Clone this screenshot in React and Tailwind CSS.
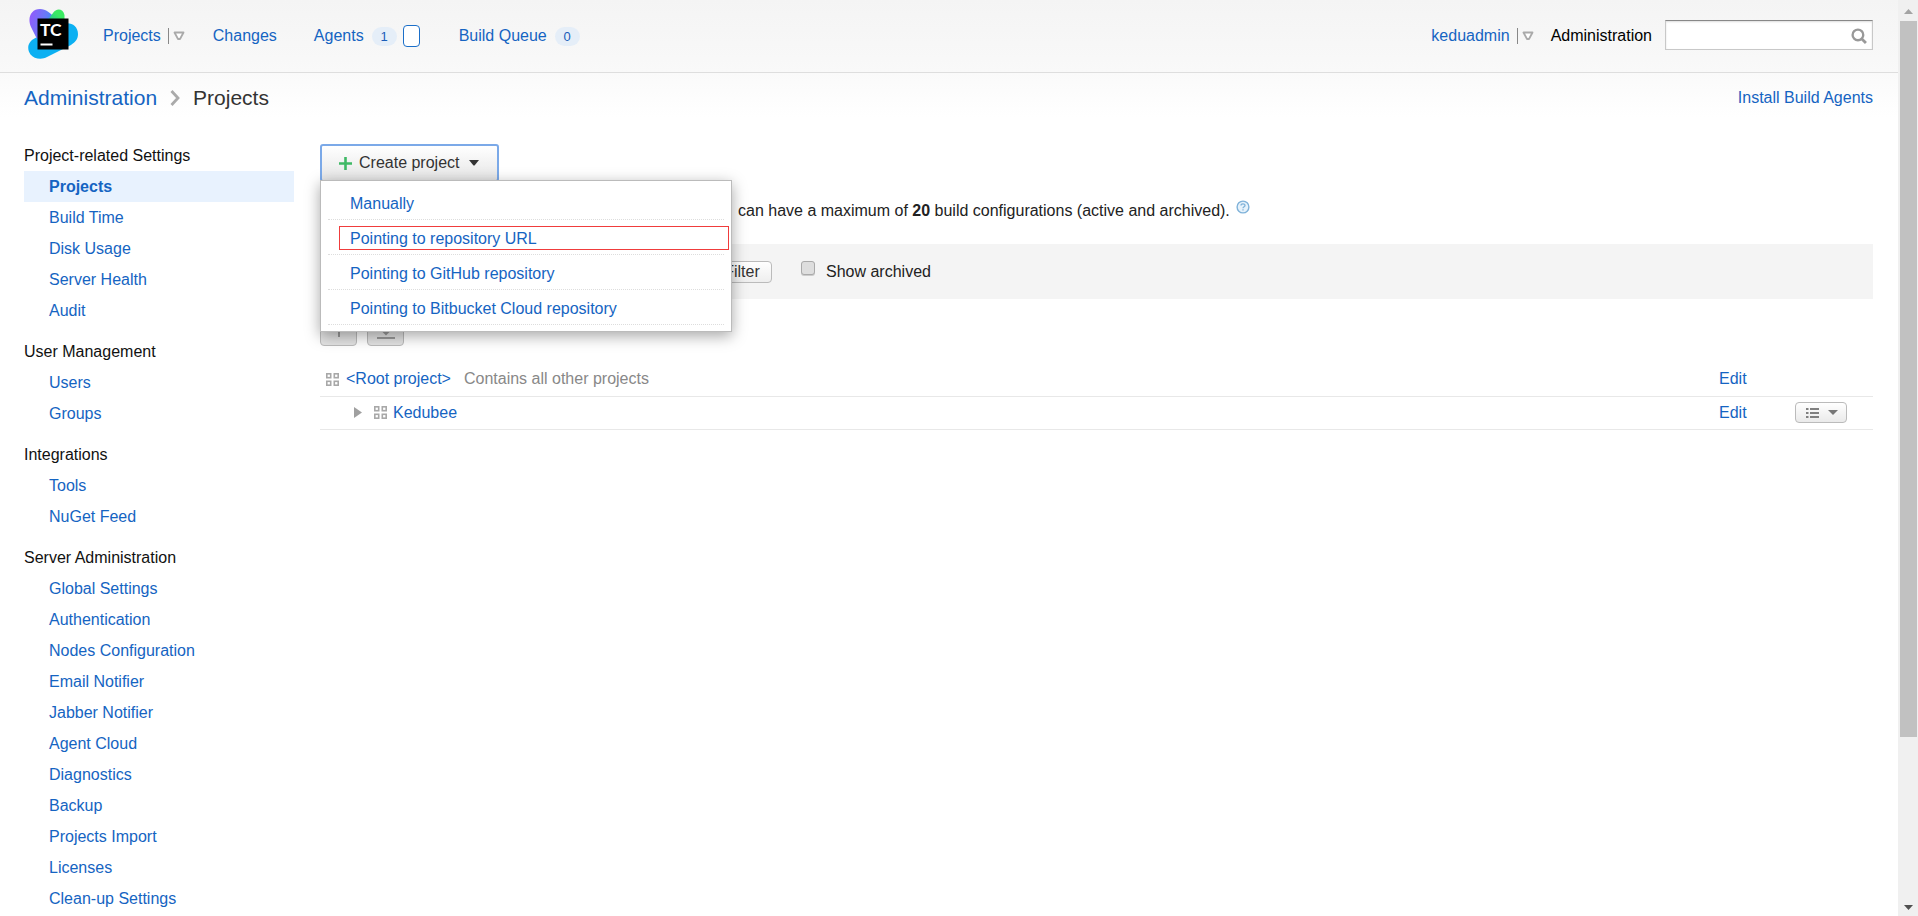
import { useState } from 'react'
import { clsx } from 'clsx'

const menuSections = [
  {
    title: 'Project-related Settings',
    items: ['Projects', 'Build Time', 'Disk Usage', 'Server Health', 'Audit']
  },
  {
    title: 'User Management',
    items: ['Users', 'Groups']
  },
  {
    title: 'Integrations',
    items: ['Tools', 'NuGet Feed']
  },
  {
    title: 'Server Administration',
    items: [
      'Global Settings',
      'Authentication',
      'Nodes Configuration',
      'Email Notifier',
      'Jabber Notifier',
      'Agent Cloud',
      'Diagnostics',
      'Backup',
      'Projects Import',
      'Licenses',
      'Clean-up Settings'
    ]
  }
]

const createOptions = [
  { label: 'Manually' },
  { label: 'Pointing to repository URL', marked: true },
  { label: 'Pointing to GitHub repository' },
  { label: 'Pointing to Bitbucket Cloud repository' }
]

function Logo() {
  return (
    <svg width="50" height="50" viewBox="0 0 50 50" role="img" aria-label="TeamCity">
      <defs>
        <linearGradient id="violet" x1="0" y1="0.3" x2="1" y2="0.6">
          <stop offset="0" stopColor="#905cfb" />
          <stop offset="0.5" stopColor="#6a78f8" />
          <stop offset="1" stopColor="#1e9df2" />
        </linearGradient>
        <linearGradient id="green" x1="1" y1="0" x2="0" y2="1">
          <stop offset="0.4" stopColor="#3bea62" />
          <stop offset="1" stopColor="#1fb9a5" />
        </linearGradient>
      </defs>
      <path d="M10 28 L37 14.500 C43 13 50 17 50 25 C50 30 47.500 33 43 36 L19 48 C14 51 6 50 2.500 45.500 C-2 39 0 31 10 28Z" fill="#0cb0f2" />
      <path d="M12 0 C18 0 22 4 29 10 L29 24 L9 30 L3 18 C-1 9 3 0 12 0Z" fill="url(#violet)" />
      <path d="M20 11 L25 4 C28 -1 35 -1 36.500 6 L36.500 14 L20 14Z" fill="url(#green)" />
      <rect x="9.500" y="9.500" width="31" height="31" fill="#000" />
      <text x="12" y="26.500" fill="#fff" fontFamily="Lato, sans-serif" fontWeight="700" fontSize="17.500">TC</text>
      <rect x="12.500" y="34.500" width="12" height="2" fill="#fff" />
    </svg>
  )
}

function MenuArrow({ label }) {
  return (
    <button aria-label={label} className="flex items-center gap-1 pl-[7px]">
      <span className="w-px h-4 bg-[#888]" />
      <svg width="12" height="10" viewBox="0 0 12 10">
        <path d="M1.500 1.500H10.500L7 8H5Z" fill="#fff" stroke="#aaa" strokeWidth="1.800" strokeLinejoin="round" />
      </svg>
    </button>
  )
}

function Badge({ children }) {
  return (
    <span className="w-[25px] h-[19px] rounded-full bg-[#e5eef8] text-[13px] leading-[19px] text-center text-[#1b5db8]">
      {children}
    </span>
  )
}

function ProjectIcon() {
  return (
    <svg width="13" height="13" viewBox="0 0 13 13" fill="none" stroke="#a8a8a8" strokeWidth="1.600" className="shrink-0">
      <rect x="0.800" y="0.800" width="3.900" height="3.900" />
      <rect x="8.300" y="0.800" width="3.900" height="3.900" />
      <rect x="0.800" y="8.300" width="3.900" height="3.900" />
      <rect x="8.300" y="8.300" width="3.900" height="3.900" />
    </svg>
  )
}

function Header() {
  return (
    <header className="flex items-center h-[73px] pl-7 pr-[25px] border-b border-[#dedede] bg-linear-to-b from-[#f4f4f4] to-[#f9f9f9]">
      <a href="#home" className="block -mt-1 mr-[25px]"><Logo /></a>
      <nav className="flex items-center flex-1 text-[#1564c2]">
        <div className="flex items-center">
          <a href="#projects">Projects</a>
          <MenuArrow label="Show projects" />
        </div>
        <a href="#changes" className="ml-7">Changes</a>
        <div className="flex items-center ml-[37px]">
          <a href="#agents" className="mr-2">Agents</a>
          <Badge>1</Badge>
          <span className="w-[17px] h-[22px] ml-1.5 rounded-[4px] border border-[#1b6fc9] bg-white" />
        </div>
        <div className="flex items-center ml-[39px]">
          <a href="#queue" className="mr-2">Build Queue</a>
          <Badge>0</Badge>
        </div>
      </nav>
      <div className="flex items-center">
        <a href="#profile" className="text-[#1564c2]">keduadmin</a>
        <MenuArrow label="User menu" />
        <a href="#admin" className="ml-[17px] mr-[13px] text-black">Administration</a>
        <div className="relative -mt-0.5">
          <input
            type="text"
            aria-label="Search"
            className="block w-52 h-[30px] pl-2 pr-8 bg-white border border-[#c8c8c8] border-t-[#888] outline-none shadow-[inset_0_1px_2px_#ddd]"
          />
          <svg width="16" height="16" viewBox="0 0 15 15" className="absolute right-1.5 top-2" fill="none" stroke="#999">
            <circle cx="6.500" cy="6.500" r="5" strokeWidth="2.200" />
            <path d="M10 10L14 14" strokeWidth="2.600" />
          </svg>
        </div>
      </div>
    </header>
  )
}

function Sidebar() {
  return (
    <aside className="w-[270px] shrink-0">
      {menuSections.map((section, index) => (
        <section key={section.title} className={clsx(index > 0 && 'mt-[11px]')}>
          <h2 className="leading-[30px] text-[#111]">{section.title}</h2>
          <ul>
            {section.items.map(item => (
              <li key={item}>
                <a
                  href="#settings"
                  className={clsx(
                    'block pl-[25px] leading-[31px] text-[#1564c2]',
                    item === 'Projects' && 'bg-[#e8f2fe] font-bold'
                  )}
                >
                  {item}
                </a>
              </li>
            ))}
          </ul>
        </section>
      ))}
    </aside>
  )
}

function CreateProject() {
  const [open, setOpen] = useState(true)

  return (
    <div className="relative w-[179px]">
      <button
        onClick={() => setOpen(!open)}
        aria-expanded={open}
        className="flex items-center w-full h-[38px] pl-[17px] rounded-[3px] border-2 border-[#7ba9e8] bg-linear-to-b from-white to-[#e6e6e6] text-[#333]"
      >
        <svg width="13" height="13" viewBox="0 0 13 13" stroke="#3fb965" strokeWidth="2.600">
          <path d="M6.500 0V13M0 6.500H13" />
        </svg>
        <span className="ml-[7px]">Create project</span>
        <svg width="10" height="6" viewBox="0 0 10 6" className="ml-[9px]">
          <path d="M0 0H10L5.500 5.500H4.500Z" fill="#333" />
        </svg>
      </button>
      {open && (
        <ul className="absolute left-0 top-9 z-10 w-[412px] px-[7px] pt-1 pb-1.5 bg-white border border-[#bbb] shadow-[0_4px_14px_rgba(0,0,0,0.35)]">
          {createOptions.map(option => (
            <li key={option.label} className="relative h-[35px] pl-[22px] border-b border-dotted border-[#ddd]">
              <a href="#create" className="block leading-[38px] text-[#1564c2]">{option.label}</a>
              {option.marked && (
                <span className="absolute left-[11px] -right-[5px] top-1.5 h-6 border border-[#f03c3c]" />
              )}
            </li>
          ))}
        </ul>
      )}
    </div>
  )
}

function TreeButton({ label, children }) {
  return (
    <button aria-label={label} className="flex items-end justify-center w-[37px] h-[26px] pb-1.5 rounded-[4px] border border-[#bbb] bg-[#e3e3e3]">
      <svg width="18" height="13" viewBox="0 0 18 13" fill="none" stroke="#999" strokeWidth="2">
        {children}
      </svg>
    </button>
  )
}

function ProjectsTable() {
  return (
    <table className="w-full mt-[17px] border-collapse">
      <tbody>
        <tr className="h-[33px] border-b border-[#e8e8e8]">
          <td>
            <div className="flex items-center pl-1.5">
              <ProjectIcon />
              <a href="#root" className="ml-[7px] text-[#1564c2]">&lt;Root project&gt;</a>
              <span className="ml-[13px] text-[#888]">Contains all other projects</span>
            </div>
          </td>
          <td className="w-[76px]"><a href="#edit-root" className="text-[#1564c2]">Edit</a></td>
          <td className="w-[78px]" />
        </tr>
        <tr className="h-[33px] border-b border-[#e8e8e8]">
          <td>
            <div className="flex items-center pl-[34px]">
              <button aria-label="Expand Kedubee">
                <svg width="8" height="11" viewBox="0 0 8 11"><path d="M0 0L8 5.500L0 11Z" fill="#a0a0a0" /></svg>
              </button>
              <span className="ml-3"><ProjectIcon /></span>
              <a href="#kedubee" className="ml-1.5 text-[#1564c2]">Kedubee</a>
            </div>
          </td>
          <td><a href="#edit-kedubee" className="text-[#1564c2]">Edit</a></td>
          <td>
            <button
              aria-label="Project actions"
              className="flex items-center gap-[9px] w-[52px] h-[21px] pl-2.5 rounded-[4px] border border-[#bbb] bg-linear-to-b from-white to-[#eaeaea]"
            >
              <svg width="13" height="10" viewBox="0 0 13 10" fill="#808080">
                <path d="M0 0H2.500V2H0ZM4 0H13V2H4ZM0 4H2.500V6H0ZM4 4H13V6H4ZM0 8H2.500V10H0ZM4 8H13V10H4Z" />
              </svg>
              <svg width="10" height="5" viewBox="0 0 10 5"><path d="M0 0H10L5 5Z" fill="#777" /></svg>
            </button>
          </td>
        </tr>
      </tbody>
    </table>
  )
}

function Projects() {
  return (
    <main className="flex-1 pt-[3px]">
      <CreateProject />

      {/* License limits */}
      <p className="flex items-center h-5 mt-[19px] pl-[418px] text-[#222]">
        <span>can have a maximum of <strong>20</strong> build configurations (active and archived).</span>
        <a href="#help" aria-label="Help" className="ml-1.5 -mt-2">
          <svg width="14" height="14" viewBox="0 0 14 14" fill="none" stroke="#7fb2d9">
            <circle cx="7" cy="7" r="5.900" fill="#e6f2fb" strokeWidth="1.400" />
            <path d="M5 5.500C5 3.300 9 3.300 9 5.400C9 6.700 7 6.700 7 8.300M7 9.300V10.600" strokeWidth="1.300" />
          </svg>
        </a>
      </p>

      {/* Filter */}
      <form className="flex items-center h-[55px] mt-[23px] pl-3 bg-[#f4f4f4] text-[#222]">
        <input aria-label="Filter" type="text" className="w-[370px] h-[22px] px-1 bg-white border border-[#ccc]" />
        <button type="button" className="w-[60px] h-[22px] ml-[10px] leading-5 rounded-[4px] border border-[#bbb] bg-linear-to-b from-white to-[#eee] text-[#333]">
          Filter
        </button>
        <input
          id="archived"
          type="checkbox"
          className="appearance-none w-3.5 h-3.5 ml-[29px] -mt-2 rounded-[3px] border border-[#aaa] bg-[#dedede] shadow-[0_1px_0_#ccc]"
        />
        <label htmlFor="archived" className="ml-[11px]">Show archived</label>
      </form>

      <div className="flex gap-2.5 mt-[21px]">
        <TreeButton label="Expand all">
          <path d="M4 5L9 1L14 5M9 1V11" />
        </TreeButton>
        <TreeButton label="Collapse all">
          <path d="M9 0V7M5 4L9 8L13 4M0 12H18" />
        </TreeButton>
      </div>

      <ProjectsTable />
    </main>
  )
}

function Scrollbar() {
  return (
    <div className="sticky top-0 flex flex-col justify-between items-center w-5 h-screen shrink-0 pt-[9px] pb-1.5 bg-[#f0f0f0]">
      <svg width="9" height="5" viewBox="0 0 9 5"><path d="M0 5H9L4.500 0Z" fill="#a3a3a3" /></svg>
      <div className="flex-1 w-full mt-[7px] pl-0.5 pr-px">
        <div className="h-[81%] bg-[#c1c1c1]" />
      </div>
      <svg width="9" height="5" viewBox="0 0 9 5"><path d="M0 0H9L4.500 5Z" fill="#505050" /></svg>
    </div>
  )
}

export default function App() {
  return (
    <div className="flex min-h-screen bg-white text-base leading-5 font-['Liberation_Sans',Arial,sans-serif]">
      <div className="flex-1 min-w-0">
        <Header />
        <div className="pl-6 pr-[25px] bg-linear-to-b from-[#fafafa] to-white to-[44px]">
          <div className="flex items-center justify-between h-[50px]">
            <h1 className="flex items-center text-[21px] leading-6">
              <a href="#admin" className="text-[#1564c2]">Administration</a>
              <svg width="10" height="16" viewBox="0 0 10 16" className="mx-[13px]" fill="none" stroke="#aaa" strokeWidth="2.800">
                <path d="M1.500 1L8 8L1.500 15" />
              </svg>
              <span className="text-[#333]">Projects</span>
            </h1>
            <a href="#install" className="text-[#1564c2]">Install Build Agents</a>
          </div>
          <div className="flex gap-[26px] mt-[18px]">
            <Sidebar />
            <Projects />
          </div>
        </div>
      </div>
      <Scrollbar />
    </div>
  )
}
